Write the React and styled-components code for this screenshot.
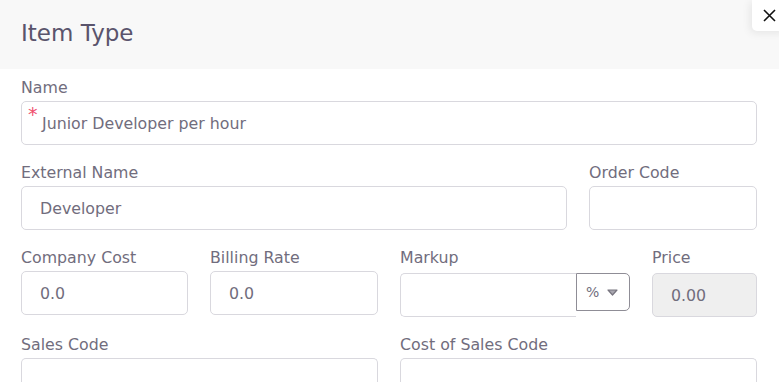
import React from "react";
import styled, { createGlobalStyle } from "styled-components";

const Global = createGlobalStyle`
  html, body { margin: 0; padding: 0; background: #ffffff; overflow: hidden; }
  body { font-family: "DejaVu Sans", "Open Sans", sans-serif; }
  * { box-sizing: border-box; }
`;

const Modal = styled.div`
  position: relative;
  width: 779px;
  height: 382px;
  background: #ffffff;
  overflow: hidden;
`;

const Header = styled.div`
  height: 69px;
  background: #f8f8f8;
  display: flex;
  align-items: center;
  padding: 0 21px 4px;
`;

const Title = styled.h2`
  margin: 0;
  font-size: 23px;
  font-weight: 400;
  color: #5a546c;
`;

const CloseButton = styled.button`
  position: absolute;
  top: 0;
  right: -8px;
  width: 35px;
  height: 31px;
  border: none;
  background: #ffffff;
  border-radius: 0 0 0 5px;
  box-shadow: -2px 2px 8px rgba(0, 0, 0, 0.08);
  padding: 0 0 0 11px;
  display: flex;
  align-items: center;
  justify-content: flex-start;
  cursor: pointer;
`;

const Form = styled.div`
  padding: 9px 22px 0 21px;
  display: flex;
  flex-direction: column;
  gap: 18px;
`;

const Row = styled.div`
  display: grid;
  grid-template-columns: ${(p) => p.$cols};
  column-gap: 22px;
`;

const Field = styled.div`
  display: flex;
  flex-direction: column;
  min-width: 0;
`;

const Label = styled.label`
  font-size: 15.8px;
  line-height: 20px;
  color: #716d7d;
  margin-bottom: ${(p) => (p.$mb ? p.$mb : "3px")};
  white-space: nowrap;
`;

const InputBox = styled.div`
  position: relative;
  height: 44px;
  border: 1px solid #d9d8de;
  border-radius: 5px;
  background: ${(p) => (p.$disabled ? "#efefef" : "#ffffff")};
  display: flex;
  align-items: center;
  padding-left: ${(p) => p.$pl || "18px"};
  font-size: 15.8px;
  color: #716d7d;
  ${(p) => p.$cut && "height: 40px; border-bottom: none; border-radius: 5px 5px 0 0;"}
`;

const Required = styled.span`
  position: absolute;
  left: 6px;
  top: 5px;
  color: #f0506e;
  font-size: 19px;
  line-height: 14px;
`;

const Value = styled.span``;

const MarkupWrap = styled.div`
  display: flex;
  height: 44px;
`;

const MarkupInput = styled.div`
  flex: 1;
  height: 44px;
  border: 1px solid #d9d8de;
  border-right: none;
  border-radius: 5px 0 0 5px;
`;

const UnitSelect = styled.div`
  width: 54px;
  height: 38px;
  border: 1px solid #8f8d96;
  border-radius: 0 5px 5px 0;
  display: flex;
  align-items: center;
  padding-left: 9px;
  gap: 8px;
  font-size: 14px;
  color: #716d7d;
`;

function TextField({ label, value, disabled, cut }) {
  return (
    <Field>
      <Label>{label}</Label>
      <InputBox $disabled={disabled} $cut={cut}>
        {value && <Value>{value}</Value>}
      </InputBox>
    </Field>
  );
}

export default function App() {
  return (
    <>
      <Global />
      <Modal>
        <Header>
          <Title>Item Type</Title>
        </Header>
        <CloseButton aria-label="Close">
          <svg width="13" height="13" viewBox="0 0 13 13">
            <path d="M1 1 L12 12 M12 1 L1 12" stroke="#111" strokeWidth="1.6" fill="none" />
          </svg>
        </CloseButton>
        <Form>
          <Row $cols="1fr">
            <Field>
              <Label>Name</Label>
              <InputBox $pl="20px">
                <Required>*</Required>
                <Value>Junior Developer per hour</Value>
              </InputBox>
            </Field>
          </Row>
          <Row $cols="546px 168px">
            <TextField label="External Name" value="Developer" />
            <TextField label="Order Code" />
          </Row>
          <Row $cols="167px 168px 230px 105px">
            <TextField label="Company Cost" value="0.0" />
            <TextField label="Billing Rate" value="0.0" />
            <Field>
              <Label $mb="5px">Markup</Label>
              <MarkupWrap>
                <MarkupInput />
                <UnitSelect>
                  <span>%</span>
                  <svg width="11" height="7" viewBox="0 0 11 7">
                    <path d="M1 1 L10 1 L5.5 6 Z" fill="#a9a7b0" stroke="#77747f" strokeWidth="1.2" strokeLinejoin="round" />
                  </svg>
                </UnitSelect>
              </MarkupWrap>
            </Field>
            <Field>
              <Label $mb="5px">Price</Label>
              <InputBox $disabled>
                <Value>0.00</Value>
              </InputBox>
            </Field>
          </Row>
          <Row $cols="357px 357px">
            <TextField label="Sales Code" cut />
            <TextField label="Cost of Sales Code" cut />
          </Row>
        </Form>
      </Modal>
    </>
  );
}
